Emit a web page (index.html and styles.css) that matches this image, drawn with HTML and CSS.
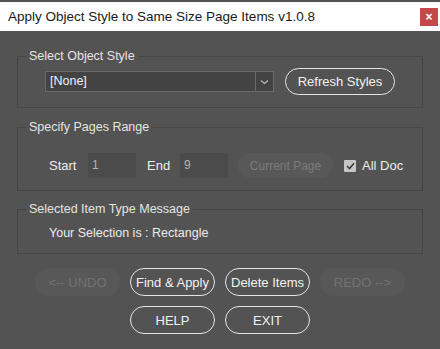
FILE: index.html
```html
<!DOCTYPE html>
<html lang="en">
  <head>
    <meta charset="UTF-8" />
    <title>Apply Object Style to Same Size Page Items v1.0.8</title>
    <link rel="stylesheet" href="styles.css">
  </head>
  <body>
    <!-- title bar -->
    <div class="titlebar">
      <span class="titlebar__text">Apply Object Style to Same Size Page Items v1.0.8</span>
      <span class="titlebar__close">&#215;</span>
    </div>

    <div class="dialog">
      <fieldset class="panel panel--style">
        <legend>Select Object Style</legend>
        <div class="row">
          <div class="select">
            <span class="select__value">[None]</span>
            <span class="select__arrow">
              <svg width="9" height="6" viewBox="0 0 9 6"><path d="M1 1.5 L4.5 4.5 L8 1.5" fill="none" stroke="#b8b8b8" stroke-width="1.2"/></svg>
            </span>
          </div>
          <button class="btn btn--refresh">Refresh Styles</button>
        </div>
      </fieldset>

      <fieldset class="panel panel--range">
        <legend>Specify Pages Range</legend>
        <div class="row">
          <span class="label label--start">Start</span>
          <span class="field">1</span>
          <span class="label label--end">End</span>
          <span class="field">9</span>
          <button class="btn btn--current" disabled>Current Page</button>
          <span class="check">
            <svg width="9" height="8" viewBox="0 0 9 8"><path d="M1 4 L3.5 6.5 L8 1.2" fill="none" stroke="#3c3c3c" stroke-width="1.6"/></svg>
          </span>
          <span class="label">All Doc</span>
        </div>
      </fieldset>

      <fieldset class="panel panel--msg">
        <legend>Selected Item Type Message</legend>
        <div class="message">Your Selection is : Rectangle</div>
      </fieldset>

      <div class="actions">
        <button class="btn btn--off" disabled>&lt;-- UNDO</button>
        <button class="btn">Find &amp; Apply</button>
        <button class="btn">Delete Items</button>
        <button class="btn btn--off" disabled>REDO --&gt;</button>
      </div>
      <div class="actions actions--bottom">
        <button class="btn">HELP</button>
        <button class="btn">EXIT</button>
      </div>
    </div>
  </body>
</html>
```

FILE: styles.css
```css
body {
  margin: 0;
  background-color: #535353;
  font-family: "Liberation Sans", Arial, sans-serif;
  color: #e8e8e8;
  height: 349px;
  overflow: hidden;
}
.titlebar {
  margin-top: 2px;
  height: 29px;
  background-color: #ffffff;
  display: flex;
  align-items: center;
  justify-content: space-between;
  padding: 0 2px 0 8px;
  color: #1a1a1a;
}
.titlebar__text {
  font-size: 13.5px;
}
.titlebar__close {
  width: 18px;
  height: 18px;
  background-color: #c4484a;
  color: #fff;
  font-size: 12px;
  font-weight: bold;
  display: flex;
  align-items: center;
  justify-content: center;
  align-self: flex-start;
  margin-top: 6px;
}
.dialog {
  padding: 17px 17px 0 17px;
}
.panel {
  margin: 0;
  border: 1px solid #464646;
  padding: 0 8px 12px 8px;
  min-width: 0;
}
.panel legend {
  padding: 0 3px;
  font-size: 12.5px;
  line-height: 16px;
  color: #e4e4e4;
}
.panel + .panel {
  margin-top: 11px;
}
.panel--msg {
  margin-top: 10px !important;
}
.row {
  display: flex;
  align-items: center;
}
.panel--style .row {
  padding: 4px 0 0 19px;
}
.panel--range .row {
  padding: 18px 0 0 23px;
  height: 25px;
}
.select {
  width: 227px;
  height: 19px;
  border: 1px solid #6a6a6a;
  background-color: #434343;
  display: flex;
  font-size: 12.5px;
}
.select__value {
  flex: 1;
  padding-left: 4px;
  line-height: 19px;
  color: #f0f0f0;
}
.select__arrow {
  width: 17px;
  border-left: 1px solid #6a6a6a;
  display: flex;
  align-items: center;
  justify-content: center;
}
.btn {
  font-family: "Liberation Sans", Arial, sans-serif;
  font-size: 13px;
  color: #f2f2f2;
  background-color: #535353;
  border: 1.5px solid #e6e6e6;
  border-radius: 14px;
  width: 85px;
  height: 28px;
  padding: 0;
}
.btn--refresh {
  width: 110px;
  height: 27px;
  margin-left: 11px;
}
.label {
  font-size: 13px;
  color: #ececec;
}
.label--start {
  width: 39px;
}
.label--end {
  margin-left: 11px;
  width: 33px;
}
.field {
  width: 44px;
  height: 25px;
  padding-left: 4px;
  background-color: #4b4b4b;
  font-size: 12px;
  line-height: 25px;
  color: #b4b4b4;
}
.btn--current {
  width: 95px;
  height: 25px;
  margin-left: 10px;
  border: none;
  background-color: #585858;
  color: #7c7c7c;
  font-size: 12px;
  border-radius: 12px;
}
.check {
  width: 12px;
  height: 12px;
  margin: 0 6px 0 11px;
  background-color: #c6c6c6;
  border-radius: 1px;
  display: flex;
  align-items: center;
  justify-content: center;
}
.message {
  padding: 8px 0 0 23px;
  font-size: 12.5px;
  line-height: 16px;
  color: #ececec;
}
.actions {
  display: flex;
  justify-content: center;
  gap: 10px;
  margin-top: 14px;
}
.actions--bottom {
  margin-top: 10px;
}
.btn--off {
  border: none;
  background-color: #585858;
  color: #727272;
}
```
